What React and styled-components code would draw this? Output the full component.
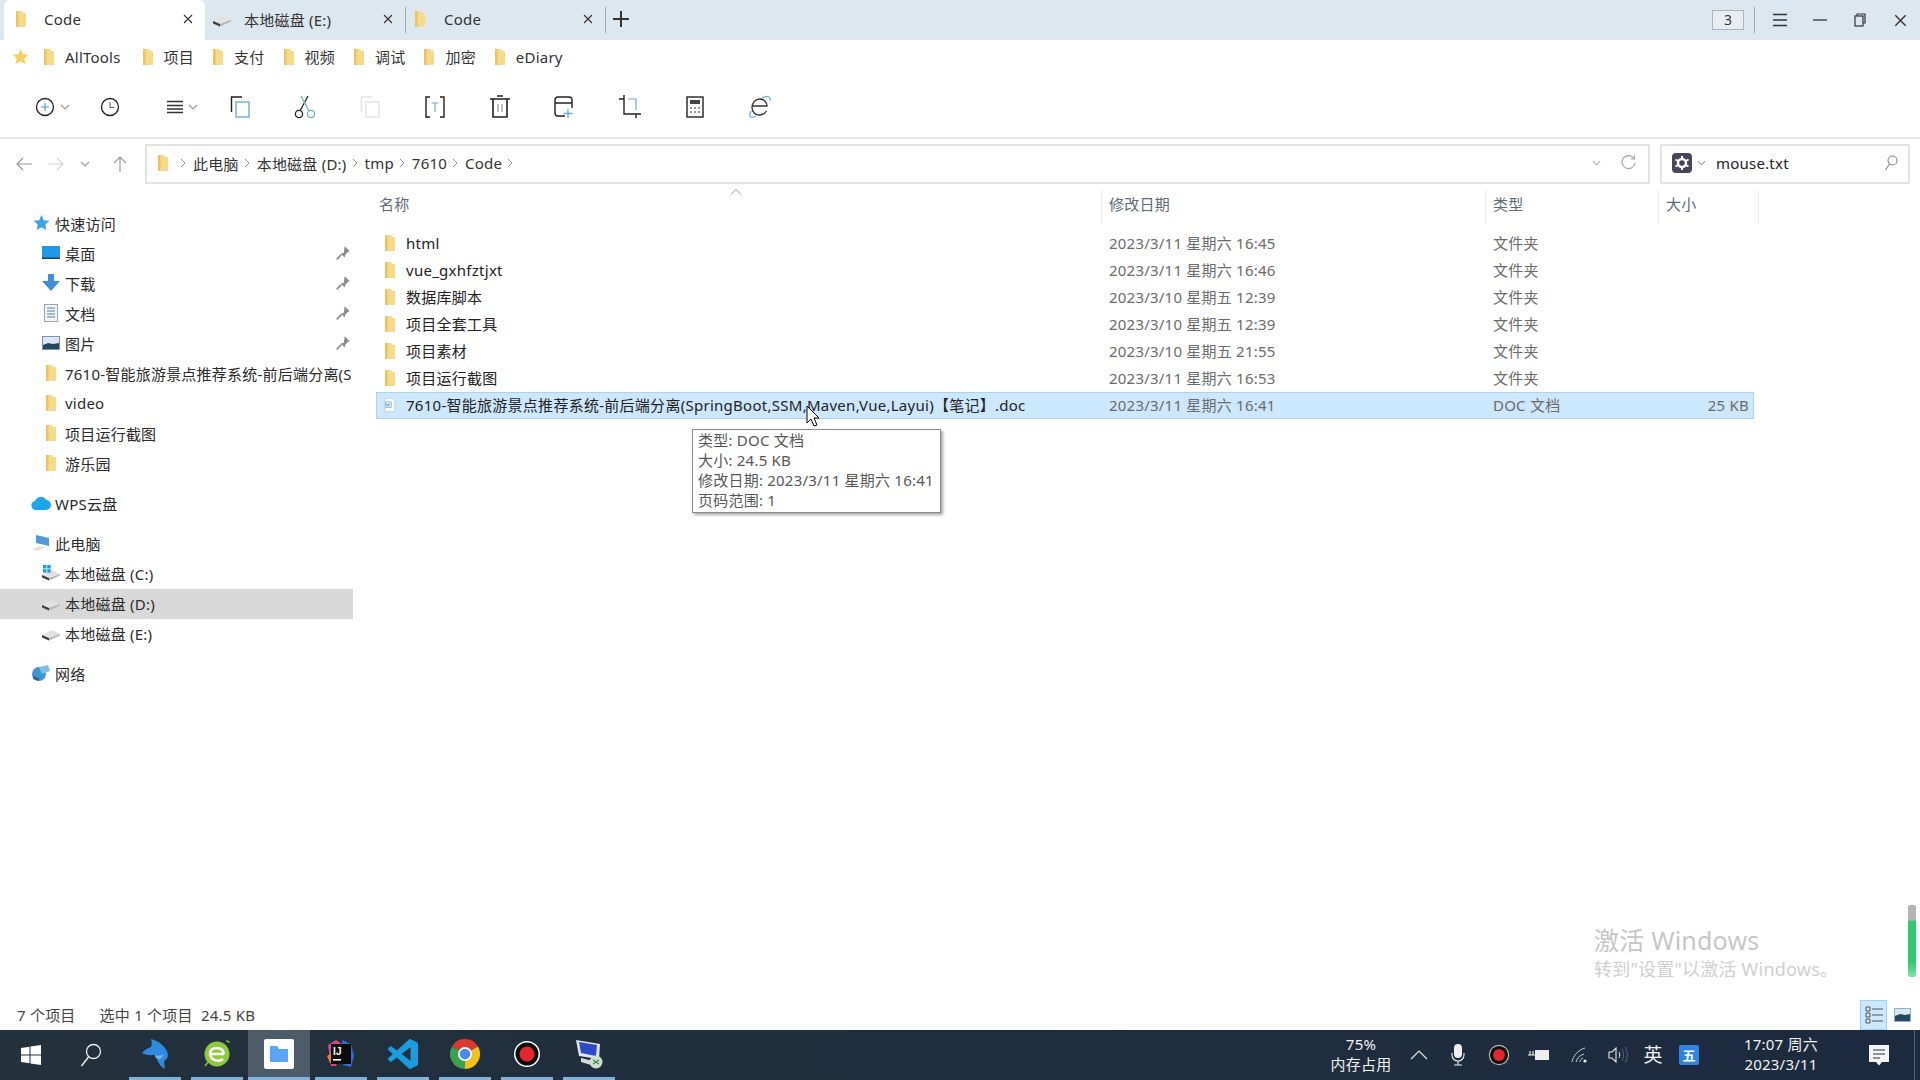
import React from 'react';
import styled, { createGlobalStyle } from 'styled-components';

const GlobalStyle = createGlobalStyle`
  html, body {
    margin: 0;
    padding: 0;
    background: #fff;
    font-family: "Noto Sans", "Noto Sans CJK SC", sans-serif;
    font-size: 15px;
    letter-spacing: 0.22px;
    color: #222;
  }
  * { box-sizing: border-box; }
`;

const Page = styled.div`
  position: relative;
  width: 1920px;
  height: 1080px;
  overflow: hidden;
  display: flex;
  flex-direction: column;
  background: #fff;
`;

/* tabs */
const TabBar = styled.div`
  height: 40px;
  flex: none;
  display: flex;
  align-items: stretch;
  padding-left: 4px;
  background: #dde7f0;
`;
const Tab = styled.div`
  width: ${(p) => p.$w}px;
  display: flex;
  align-items: center;
  padding: 0 12px 2px ${(p) => p.$pad}px;
  color: #333;
  background: ${(p) => (p.$active ? '#fff' : 'transparent')};
  border-radius: ${(p) => (p.$active ? '6px 6px 0 0' : '0')};
`;
const TabIcon = styled.span`
  width: ${(p) => p.$w || 12}px;
  margin-right: ${(p) => p.$gap}px;
  display: flex;
  justify-content: center;
`;
const TabClose = styled.span`
  margin-left: auto;
  display: flex;
`;
const TabDivider = styled.div`
  width: 1px;
  height: 26px;
  margin-right: ${(p) => p.$after || 0}px;
  align-self: center;
  background: #9aa5ad;
`;
const PlusBtn = styled.div`
  width: 30px;
  display: flex;
  align-items: center;
  justify-content: center;
  margin-top: -2px;
`;
const WinControls = styled.div`
  margin-left: auto;
  display: flex;
  align-items: center;
`;
const CountBox = styled.div`
  width: 32px;
  height: 20px;
  margin-right: 10px;
  border: 1px solid #a9b4bc;
  background: #e6edf3;
  font-size: 14px;
  line-height: 18px;
  text-align: center;
  color: #333;
`;
const WinBtn = styled.div`
  width: 40px;
  display: flex;
  justify-content: center;
`;

/* favourites */
const FavBar = styled.div`
  height: 36px;
  flex: none;
  display: flex;
  align-items: center;
  gap: 18px;
  padding: 0 0 2px 11px;
  color: #333;
`;
const FavStar = styled.span`
  width: 18px;
  display: flex;
  margin-right: -4px;
`;
const FavItem = styled.div`
  display: flex;
  align-items: center;
  gap: 10px;
  line-height: 20px;
  margin-right: ${(p) => p.$extra || 0}px;
`;

/* toolbar */
const Toolbar = styled.div`
  height: 63px;
  flex: none;
  display: flex;
  align-items: center;
  padding: 1px 0 0 12px;
  border-bottom: 2px solid #e6e6e6;
`;
const ToolBtn = styled.div`
  width: 65px;
  display: flex;
  justify-content: center;
  align-items: center;
`;
const ToolChevron = styled.span`
  width: 10px;
  margin-left: 5px;
  margin-right: -15px;
  display: flex;
`;

/* address row */
const AddressRow = styled.div`
  height: 51px;
  flex: none;
  display: flex;
  align-items: flex-start;
  padding: 5px 10px 0 0;
`;
const NavGroup = styled.div`
  width: 145px;
  height: 40px;
  flex: none;
  display: flex;
  align-items: center;
  padding-left: 8px;
`;
const NavBtn = styled.span`
  width: ${(p) => p.$w}px;
  flex: none;
  display: flex;
  justify-content: center;
`;
const AddressBox = styled.div`
  flex: 1;
  height: 40px;
  display: flex;
  align-items: center;
  padding: 0 12px 2px 10px;
  border: 2px solid #e4e4e4;
  color: #333;
`;
const Crumb = styled.span`
  white-space: nowrap;
`;
const CrumbSep = styled.span`
  width: 8px;
  margin: 0 6px 0 ${(p) => (p.$first ? 10 : 4)}px;
  display: flex;
  justify-content: center;
`;
const AddressTail = styled.div`
  margin-left: auto;
  display: flex;
  align-items: center;
  gap: 20px;
`;
const SearchBox = styled.div`
  width: 250px;
  height: 40px;
  flex: none;
  margin-left: 10px;
  display: flex;
  align-items: center;
  padding: 0 10px 2px;
  border: 2px solid #e4e4e4;
`;
const SearchChevron = styled.span`
  margin-left: 5px;
  display: flex;
`;
const SearchText = styled.span`
  margin-left: 10px;
  color: #222;
`;
const SearchGlass = styled.span`
  margin-left: auto;
  display: flex;
`;

/* main */
const Main = styled.div`
  flex: 1;
  min-height: 0;
  display: flex;
`;
const Sidebar = styled.div`
  width: 376px;
  flex: none;
  padding-top: 19px;
`;
const NavSection = styled.div`
  margin-bottom: 10px;
`;
const NavRow = styled.div`
  width: 353px;
  height: 30px;
  display: flex;
  align-items: center;
  gap: 4px;
  padding: 0 1px 2px ${(p) => p.$indent}px;
  color: #2b2b2b;
  background: ${(p) => (p.$selected ? '#d9d9d9' : 'transparent')};
`;
const NavIcon = styled.span`
  width: 20px;
  flex: none;
  display: flex;
  justify-content: center;
  align-items: center;
`;
const NavLabel = styled.span`
  flex: 1;
  min-width: 0;
  overflow: hidden;
  white-space: nowrap;
`;
const Pin = styled.span`
  flex: none;
  margin-right: 1px;
  display: flex;
`;

const FilePane = styled.div`
  flex: 1;
  min-width: 0;
`;
const HeaderRow = styled.div`
  height: 34px;
  margin-bottom: 6px;
  display: grid;
  grid-template-columns: 725px 384px 173px 100px;
  color: #5f6b78;
`;
const HeaderCell = styled.div`
  position: relative;
  display: flex;
  align-items: center;
  padding: 0 0 8px ${(p) => p.$pad ?? 8}px;
  border-right: 1px solid #ececec;
  margin-right: -1px;
`;
const SortCaret = styled.span`
  position: absolute;
  left: 354px;
  top: -1px;
  display: flex;
`;
const FileRow = styled.div`
  width: 1378px;
  height: 27px;
  display: grid;
  grid-template-columns: 725px 384px 173px 96px;
  align-items: center;
  background: ${(p) => (p.$selected ? '#cce8ff' : 'transparent')};
  box-shadow: ${(p) => (p.$selected ? 'inset 0 0 0 1px #a8d3f2' : 'none')};
`;
const NameCell = styled.div`
  display: flex;
  align-items: center;
  gap: 10px;
  padding: 0 0 2px 8px;
  color: #222;
  letter-spacing: 0.27px;
  white-space: nowrap;
`;
const FileIconBox = styled.span`
  width: 12px;
  flex: none;
  display: flex;
  justify-content: center;
`;
const MetaCell = styled.div`
  padding: 0 ${(p) => (p.$right ? '5px' : '8px')} 2px;
  color: #6b6b6b;
  text-align: ${(p) => (p.$right ? 'right' : 'left')};
  white-space: nowrap;
`;

/* status */
const StatusBar = styled.div`
  height: 30px;
  flex: none;
  display: flex;
  align-items: center;
  padding-left: 17px;
  color: #444;
`;
const StatusText = styled.span`
  margin-right: ${(p) => p.$gap || 0}px;
  padding-bottom: 2px;
  white-space: pre;
`;
const ViewBtns = styled.div`
  margin-left: auto;
  display: flex;
  align-items: stretch;
  height: 30px;
  padding-right: 9px;
`;
const ViewBtn = styled.div`
  width: ${(p) => p.$w}px;
  margin-right: ${(p) => p.$gap || 0}px;
  display: flex;
  align-items: center;
  justify-content: center;
  background: ${(p) => (p.$active ? '#cce8ff' : 'transparent')};
  border: ${(p) => (p.$active ? '1px solid #99d1ff' : 'none')};
`;

/* taskbar */
const Taskbar = styled.div`
  height: 50px;
  flex: none;
  display: flex;
  background: linear-gradient(90deg, #22313c 0%, #1f2e3e 50%, #1b2a40 100%);
  color: #f2f2f2;
`;
const StartBtn = styled.div`
  width: ${(p) => p.$w}px;
  flex: none;
  display: flex;
  align-items: center;
  justify-content: center;
`;
const AppSlot = styled.div`
  width: 62px;
  flex: none;
  position: relative;
  display: flex;
  align-items: center;
  justify-content: center;
  padding-bottom: 3px;
  background: ${(p) => (p.$active ? '#4b5b67' : 'transparent')};
  &::after {
    content: '';
    position: absolute;
    bottom: 0;
    height: 3px;
    left: ${(p) => (p.$active ? 0 : 5)}px;
    right: ${(p) => (p.$active ? 0 : 5)}px;
    background: #7fb3d8;
  }
`;
const Tray = styled.div`
  margin-left: auto;
  display: flex;
  align-items: stretch;
  padding-right: 17px;
  position: relative;
`;
const TraySlot = styled.div`
  width: ${(p) => p.$w}px;
  display: flex;
  flex-direction: column;
  align-items: center;
  justify-content: center;
  padding-bottom: ${(p) => (p.$text ? 2 : 0)}px;
  font-size: ${(p) => p.$fs || 15}px;
  line-height: 20px;
  white-space: nowrap;
`;
const ImeBadge = styled.div`
  width: 20px;
  height: 20px;
  border-radius: 2px;
  background: #2f86e0;
  color: #fff;
  font-size: 13px;
  font-weight: 700;
  line-height: 20px;
  text-align: center;
`;
const TrayEdge = styled.div`
  position: absolute;
  top: 0;
  bottom: 0;
  right: 5px;
  width: 1px;
  background: #56626e;
`;

/* overlays */
const Tooltip = styled.div`
  position: absolute;
  left: 692px;
  top: 429px;
  width: 249px;
  height: 84px;
  padding: 0 5px;
  background: #fff;
  border: 1px solid #8a8a8a;
  box-shadow: 2px 2px 3px rgba(0, 0, 0, 0.35);
  color: #575757;
  line-height: 20px;
  white-space: nowrap;
`;
const Cursor = styled.svg`
  position: absolute;
  left: 806px;
  top: 405px;
`;
const Watermark = styled.div`
  position: absolute;
  left: 1594px;
  top: 924px;
  color: #c6c6c6;
  white-space: nowrap;
`;
const WatermarkTitle = styled.div`
  font-size: 25px;
  line-height: 33px;
`;
const WatermarkSub = styled.div`
  font-size: 18px;
  line-height: 24px;
  color: #cfcfcf;
`;
const MemoryMeter = styled.div`
  position: absolute;
  left: 1908px;
  top: 905px;
  width: 8px;
  height: 72px;
  background: linear-gradient(180deg, #b5b5b5 0, #b5b5b5 21%, #2ecb70 23%, #2ecb70 80%, #8be3a6 100%);
  border-radius: 2px;
`;

/* drawings */
const FolderIcon = () => (
  <svg width="12" height="18" viewBox="0 0 12 18">
    <path d="M1 1h6l1.5 2H11v14H1z" fill="#f8db8a" />
    <path d="M1 1h2.500v16H1z" fill="#eec35e" />
  </svg>
);
const DriveIcon = ({ windows }) => (
  <svg width="20" height="16" viewBox="0 0 20 16">
    <polygon points="1,10 11,5 19,9 8,13" fill="#e2e2e2" />
    <path d="M1 10l7 3v2.500L1 12.500z" fill="#3d3d3d" />
    <path d="M8 13l11-4v1.500L8 15.500z" fill="#b5b5b5" />
    {windows && (
      <g fill="#1aa3dd">
        <rect x="2" y="0" width="3.500" height="3.500" />
        <rect x="6.200" y="0" width="3.500" height="3.500" />
        <rect x="2" y="4.200" width="3.500" height="3.500" />
        <rect x="6.200" y="4.200" width="3.500" height="3.500" />
      </g>
    )}
  </svg>
);
const Chevron = ({ c = '#9a9a9a', w = 10 }) => (
  <svg width={w} height="8" viewBox="0 0 10 8">
    <path d="M1 2l4 4 4-4" fill="none" stroke={c} strokeWidth="1.200" />
  </svg>
);
const CrumbChevron = () => (
  <svg width="6" height="10" viewBox="0 0 6 10">
    <path d="M1 1l4 4-4 4" fill="none" stroke="#8f8f8f" strokeWidth="1" />
  </svg>
);
const CloseX = ({ c = '#333', s = 10 }) => (
  <svg width={s} height={s} viewBox="0 0 10 10">
    <path d="M1 1l8 8M9 1l-8 8" stroke={c} strokeWidth="1.100" />
  </svg>
);
const PinIcon = () => (
  <svg width="16" height="16" viewBox="0 0 14 14">
    <path d="M8.500 1l4.500 4.500-1.500.5-2.500 2.500-.5 2.500L5 7.500l2.500-.5L8 4.500z" fill="#8c8c8c" />
    <path d="M5.500 8.500L1.500 12.500" stroke="#8c8c8c" strokeWidth="1.500" />
  </svg>
);
const DocIcon = () => (
  <svg width="16" height="20" viewBox="0 0 16 20">
    <path d="M1.500 1h9l4 4v14h-13z" fill="#f6fbff" stroke="#b9c7d6" />
    <rect x="2.500" y="6" width="7" height="7" fill="#fff" stroke="#4a86c8" strokeWidth=".8" />
    <path d="M3.500 7.500l1 4 1-3 1 3 1-4" fill="none" stroke="#4a86c8" strokeWidth=".8" />
  </svg>
);
const StarIcon = ({ color }) => (
  <svg width="18" height="18" viewBox="0 0 18 18">
    <path d="M9.500 1l2.300 5.300 5.700.5-4.300 3.700 1.300 5.600L9.500 13.200 4.500 16.100l1.300-5.600L1.500 6.800l5.700-.5z" fill={color} />
  </svg>
);

const toolIcons = {
  add: (
    <svg width="20" height="20" viewBox="0 0 20 20" fill="none">
      <circle cx="10" cy="10" r="8.500" stroke="#222" strokeWidth="1.300" />
      <path d="M10 6v8M6 10h8" stroke="#4ba3d4" strokeWidth="1.200" />
    </svg>
  ),
  clock: (
    <svg width="20" height="20" viewBox="0 0 20 20" fill="none">
      <circle cx="10" cy="10" r="8.500" stroke="#222" strokeWidth="1.300" />
      <path d="M10 5v5.500h4" stroke="#555" strokeWidth="1" />
    </svg>
  ),
  menu: (
    <svg width="16" height="14" viewBox="0 0 16 14">
      <path d="M0 1.500h16M0 5.500h16M0 9h16M0 12.500h16" stroke="#333" strokeWidth="1.300" />
    </svg>
  ),
  copy: (
    <svg width="20" height="22" viewBox="0 0 20 22" fill="none">
      <path d="M12 1H1.500v15" stroke="#222" strokeWidth="1.400" />
      <rect x="6" y="6" width="13" height="15" stroke="#6aaed6" strokeWidth="1.400" />
    </svg>
  ),
  cut: (
    <svg width="22" height="24" viewBox="0 0 22 24" fill="none">
      <path d="M14 1L6 16" stroke="#222" strokeWidth="1.300" />
      <path d="M7 1l8 15" stroke="#6aaed6" strokeWidth="1.300" />
      <circle cx="5" cy="19" r="3.600" stroke="#222" strokeWidth="1.300" />
      <circle cx="17" cy="19" r="3.600" stroke="#6aaed6" strokeWidth="1.300" />
    </svg>
  ),
  paste: (
    <svg width="20" height="22" viewBox="0 0 20 22" fill="none">
      <path d="M12 1H1.500v15" stroke="#e3e3e3" strokeWidth="1.400" />
      <rect x="6" y="6" width="13" height="15" stroke="#e3e3e3" strokeWidth="1.400" />
    </svg>
  ),
  rename: (
    <svg width="20" height="22" viewBox="0 0 20 22" fill="none">
      <path d="M5 1H1v20h4M15 1h4v20h-4" stroke="#222" strokeWidth="1.400" />
      <path d="M6.500 7h7M10 7v9" stroke="#6aaed6" strokeWidth="1.200" />
    </svg>
  ),
  trash: (
    <svg width="20" height="24" viewBox="0 0 20 24" fill="none">
      <path d="M0 4h20M7 1h6" stroke="#222" strokeWidth="1.500" />
      <path d="M3 4v18h14V4" stroke="#222" strokeWidth="1.600" />
      <path d="M8 9v8M12 9v8" stroke="#999" strokeWidth="1.300" />
    </svg>
  ),
  newFolder: (
    <svg width="21" height="24" viewBox="0 0 21 24" fill="none">
      <path d="M11 21H4a3 3 0 0 1-3-3V5a3 3 0 0 1 3-3h11a3 3 0 0 1 3 3v8M1 8h17" stroke="#222" strokeWidth="1.400" />
      <path d="M14 14v9M9.500 18.500h9" stroke="#6aaed6" strokeWidth="1.300" />
    </svg>
  ),
  crop: (
    <svg width="22" height="24" viewBox="0 0 22 24" fill="none">
      <path d="M0 4h5M5 0v19h17M17 23v-4" stroke="#222" strokeWidth="1.400" />
      <path d="M9 4h8v11" stroke="#6aaed6" strokeWidth="1.200" />
    </svg>
  ),
  calc: (
    <svg width="18" height="22" viewBox="0 0 18 22" fill="none">
      <rect x="1" y="1" width="16" height="20" stroke="#222" strokeWidth="1.400" />
      <rect x="4" y="4" width="10" height="4" fill="#444" />
      <path d="M4 12h2M8 12h2M12 12h2M4 16h2M8 16h2M12 16h2" stroke="#777" strokeWidth="1.300" />
    </svg>
  ),
  ie: (
    <svg width="24" height="24" viewBox="0 0 24 24" fill="none">
      <path d="M4 11h15c-.3-4-3.200-7-7.200-7C7.500 4 4 7.500 4 12.500c0 4.500 3.300 7.500 7.500 7.500 3 0 5.500-1.500 7-4" stroke="#333" strokeWidth="1.400" />
      <path d="M3 16C0 22 3 24 8 21M14 3c5-3 9-2 8 3" stroke="#6aaed6" strokeWidth="1.300" />
    </svg>
  ),
};

const navIcons = {
  desktop: (
    <svg width="18" height="14" viewBox="0 0 18 14">
      <rect width="18" height="13" fill="#1f97e8" />
      <rect y="11.500" width="18" height="1.500" fill="#14456b" />
    </svg>
  ),
  down: (
    <svg width="18" height="18" viewBox="0 0 18 18">
      <path d="M6 0h6v7h6l-9 10L0 7h6z" fill="#3f8fdc" />
    </svg>
  ),
  docs: (
    <svg width="14" height="18" viewBox="0 0 14 18">
      <rect x=".5" y=".5" width="13" height="17" fill="#f4f6f8" stroke="#9aa4b0" />
      <path d="M3 4h8M3 7h8M3 10h8M3 13h8" stroke="#4f7ea8" />
    </svg>
  ),
  pics: (
    <svg width="18" height="14" viewBox="0 0 18 14">
      <rect x=".5" y=".5" width="17" height="13" fill="#dbe8f3" stroke="#7f93a8" />
      <path d="M1 9l5-2 5 1 6-1v6H1z" fill="#24485f" />
    </svg>
  ),
  cloud: (
    <svg width="20" height="14" viewBox="0 0 20 14">
      <path d="M5 14a4.500 4.500 0 0 1-1-8.900A6 6 0 0 1 15 4a5 5 0 0 1 0 10z" fill="#1da7e8" />
    </svg>
  ),
  pc: (
    <svg width="20" height="18" viewBox="0 0 20 18">
      <path d="M5 1l13 3v8L5 9z" fill="#4f9cd4" />
      <path d="M1 15l8-3 6 1-8 4z" fill="#e3e3e3" />
    </svg>
  ),
  net: (
    <svg width="20" height="18" viewBox="0 0 20 18">
      <circle cx="8" cy="10" r="7" fill="#3d97d6" />
      <path d="M8 3l9-2 2 6-8 3z" fill="#7cc0e8" />
      <path d="M2 12l6 2v3l-6-2z" fill="#3f5f7a" />
    </svg>
  ),
};

const DolphinIcon = () => (
  <svg width="28" height="32" viewBox="0 0 28 32">
    <path d="M10 1c8 2 16 8 17 16 0 3-2 5-4 6l1 8c-4-2-7-6-8-10-1-1-2-3-2-4-3 0-8 1-13-2 2-3 6-5 9-6 1-2 1-5 0-8z" fill="#2f8be0" />
    <path d="M14 17c3 1 6 1 9-1-1 3-3 5-6 5-2-1-3-2-3-4z" fill="#6db5ee" />
  </svg>
);
const GreenIeIcon = () => (
  <svg width="30" height="32" viewBox="0 0 30 32">
    <circle cx="15" cy="16" r="12.500" fill="#8ccc3a" />
    <path d="M8 16h14M21 21c-4 3-12 2-13-5 0-4 3-6 7-6 4 0 7 3 7 6" fill="none" stroke="#fff" strokeWidth="2.500" />
    <path d="M3 28l3-4M24 3c2 0 3 0 3 2" stroke="#7ec33a" strokeWidth="1.500" fill="none" />
  </svg>
);
const FileMgrIcon = () => (
  <svg width="30" height="30" viewBox="0 0 30 30">
    <rect width="30" height="30" rx="2" fill="#fff" />
    <path d="M6 8a1 1 0 0 1 1-1h6l2 3h9v12a1 1 0 0 1-1 1H7a1 1 0 0 1-1-1z" fill="#5aa4f5" />
  </svg>
);
const IdeaIcon = () => (
  <svg width="32" height="32" viewBox="0 0 32 32">
    <path d="M3 7l8-5 6 4-6 22H6z" fill="#d8467e" />
    <path d="M17 2l9 4 3 12-3 11-8-2z" fill="#2f6fd8" />
    <path d="M2 18l6-4 3 10-6 1z" fill="#ee7b2e" />
    <rect x="6" y="6" width="20" height="20" fill="#0b0b0b" />
    <text x="8" y="17" fontSize="10" fontWeight="700" fontFamily="Liberation Sans, sans-serif" fill="#fff">IJ</text>
    <rect x="8" y="21" width="8" height="1.600" fill="#fff" />
  </svg>
);
const VsCodeIcon = () => (
  <svg width="30" height="30" viewBox="0 0 24 24">
    <path fill="#1a9ce0" d="M23.150 2.587L18.210.21a1.494 1.494 0 0 0-1.705.29l-9.460 8.630-4.120-3.128a.999.999 0 0 0-1.276.057L.327 7.261A1 1 0 0 0 .326 8.740L3.899 12 .326 15.260a1 1 0 0 0 .001 1.479L1.650 17.940a.999.999 0 0 0 1.276.057l4.120-3.128 9.460 8.630a1.492 1.492 0 0 0 1.704.290l4.942-2.377A1.500 1.500 0 0 0 24 20.060V3.939a1.500 1.500 0 0 0-.850-1.352zm-5.146 14.861L10.826 12l7.178-5.448v10.896z" />
  </svg>
);
const ChromeIcon = () => (
  <svg width="30" height="30" viewBox="0 0 24 24">
    <path d="M12 12L1.600 6A12 12 0 0 1 22.400 6z" fill="#d9392f" />
    <path d="M12 12L22.400 6A12 12 0 0 1 12 24z" fill="#f3c11b" />
    <path d="M12 12L12 24A12 12 0 0 1 1.600 6z" fill="#3aa14d" />
    <circle cx="12" cy="12" r="5.600" fill="#fff" />
    <circle cx="12" cy="12" r="4.300" fill="#4a8bef" />
  </svg>
);
const RecIcon = ({ ring = '#fff', s = 28 }) => (
  <svg width={s} height={s} viewBox="0 0 28 28">
    <circle cx="14" cy="14" r="13" fill={ring} />
    <circle cx="14" cy="14" r="11.500" fill="#0c0c0c" />
    <circle cx="14" cy="14" r="7.500" fill="#e5272b" />
  </svg>
);
const RemoteIcon = () => (
  <svg width="32" height="32" viewBox="0 0 32 32">
    <path d="M3 2l24 4-1 15-20-3z" fill="#dfe5ee" />
    <path d="M6 4l18 3-1 11-15-3z" fill="#2a4cc8" />
    <path d="M8 20l12 3-2 4-10-3z" fill="#d6dadd" />
    <circle cx="23" cy="24" r="6.500" fill="#d3ddd0" />
    <path d="M20 22l3 2-3 2M26 22l-3 2 3 2" stroke="#2e9b47" strokeWidth="1.300" fill="none" />
  </svg>
);

const tabs = [
  { name: 'Code', w: 201, pad: 11, gap: 17, active: true },
  { name: '本地磁盘 (E:)', w: 200, pad: 7, gap: 12, drive: true },
  { name: 'Code', w: 199, pad: 8, gap: 18 },
];
const favs = ['AllTools', '项目', '支付', '视频', '调试', '加密', 'eDiary'];
const tools = [
  { key: 'add', chevron: true },
  { key: 'clock' },
  { key: 'menu', chevron: true },
  { key: 'copy' },
  { key: 'cut' },
  { key: 'paste' },
  { key: 'rename' },
  { key: 'trash' },
  { key: 'newFolder' },
  { key: 'crop' },
  { key: 'calc' },
  { key: 'ie' },
];
const crumbs = ['此电脑', '本地磁盘 (D:)', 'tmp', '7610', 'Code'];
const files = [
  { name: 'html', date: '2023/3/11 星期六 16:45' },
  { name: 'vue_gxhfztjxt', date: '2023/3/11 星期六 16:46' },
  { name: '数据库脚本', date: '2023/3/10 星期五 12:39' },
  { name: '项目全套工具', date: '2023/3/10 星期五 12:39' },
  { name: '项目素材', date: '2023/3/10 星期五 21:55' },
  { name: '项目运行截图', date: '2023/3/11 星期六 16:53' },
];
const quickAccess = [
  { label: '桌面', icon: navIcons.desktop, pin: true },
  { label: '下载', icon: navIcons.down, pin: true },
  { label: '文档', icon: navIcons.docs, pin: true },
  { label: '图片', icon: navIcons.pics, pin: true },
  { label: '7610-智能旅游景点推荐系统-前后端分离(S', icon: <FolderIcon /> },
  { label: 'video', icon: <FolderIcon /> },
  { label: '项目运行截图', icon: <FolderIcon /> },
  { label: '游乐园', icon: <FolderIcon /> },
];
const apps = [
  { key: 'dolphin', icon: <DolphinIcon /> },
  { key: 'ie', icon: <GreenIeIcon /> },
  { key: 'files', icon: <FileMgrIcon />, active: true },
  { key: 'idea', icon: <IdeaIcon /> },
  { key: 'vscode', icon: <VsCodeIcon /> },
  { key: 'chrome', icon: <ChromeIcon /> },
  { key: 'rec', icon: <RecIcon /> },
  { key: 'remote', icon: <RemoteIcon /> },
];

export default function App() {
  return (
    <Page>
      <GlobalStyle />
      <TabBar>
        {tabs.map((t, i) => (
          <React.Fragment key={i}>
            <Tab $w={t.w} $pad={t.pad} $active={t.active}>
              <TabIcon $w={t.drive ? 20 : 12} $gap={t.gap}>
                {t.drive ? <DriveIcon /> : <FolderIcon />}
              </TabIcon>
              {t.name}
              <TabClose>
                <CloseX />
              </TabClose>
            </Tab>
            {i > 0 && <TabDivider />}
          </React.Fragment>
        ))}
        <PlusBtn>
          <svg width="16" height="16" viewBox="0 0 16 16">
            <path d="M8 0v16M0 8h16" stroke="#333" strokeWidth="2" />
          </svg>
        </PlusBtn>
        <WinControls>
          <CountBox>3</CountBox>
          <TabDivider $after={5} />
          <WinBtn>
            <svg width="14" height="14" viewBox="0 0 14 14">
              <path d="M0 1.500h14M0 7h14M0 12.500h14" stroke="#333" strokeWidth="1.300" />
            </svg>
          </WinBtn>
          <WinBtn>
            <svg width="14" height="2" viewBox="0 0 14 2">
              <path d="M0 1h14" stroke="#333" strokeWidth="1.300" />
            </svg>
          </WinBtn>
          <WinBtn>
            <svg width="14" height="14" viewBox="0 0 14 14" fill="none">
              <path d="M4 3V1h8v9h-2" stroke="#333" strokeWidth="1.200" />
              <rect x="2" y="3" width="8" height="10" stroke="#333" strokeWidth="1.200" />
            </svg>
          </WinBtn>
          <WinBtn>
            <CloseX s={13} />
          </WinBtn>
        </WinControls>
      </TabBar>

      <FavBar>
        <FavStar>
          <StarIcon color="#f7cf5e" />
        </FavStar>
        {favs.map((f) => (
          <FavItem key={f} $extra={f === 'AllTools' ? 3 : 0}>
            <FolderIcon />
            {f}
          </FavItem>
        ))}
      </FavBar>

      <Toolbar>
        {tools.map((t) => (
          <ToolBtn key={t.key}>
            {toolIcons[t.key]}
            {t.chevron && (
              <ToolChevron>
                <Chevron />
              </ToolChevron>
            )}
          </ToolBtn>
        ))}
      </Toolbar>

      <AddressRow>
        <NavGroup>
          <NavBtn $w={32}>
            <svg width="16" height="14" viewBox="0 0 16 14" fill="none">
              <path d="M7 1L1 7l6 6M1 7h15" stroke="#9a9a9a" strokeWidth="1.200" />
            </svg>
          </NavBtn>
          <NavBtn $w={32}>
            <svg width="16" height="14" viewBox="0 0 16 14" fill="none">
              <path d="M9 1l6 6-6 6M15 7H0" stroke="#d6d6d6" strokeWidth="1.200" />
            </svg>
          </NavBtn>
          <NavBtn $w={26}>
            <Chevron w={12} />
          </NavBtn>
          <NavBtn $w={44}>
            <svg width="14" height="16" viewBox="0 0 14 16" fill="none">
              <path d="M1 7l6-6 6 6M7 1v15" stroke="#9a9a9a" strokeWidth="1.200" />
            </svg>
          </NavBtn>
        </NavGroup>
        <AddressBox>
          <FolderIcon />
          <CrumbSep $first>
            <CrumbChevron />
          </CrumbSep>
          {crumbs.map((c) => (
            <React.Fragment key={c}>
              <Crumb>{c}</Crumb>
              <CrumbSep>
                <CrumbChevron />
              </CrumbSep>
            </React.Fragment>
          ))}
          <AddressTail>
            <Chevron c="#aaa" w={9} />
            <svg width="15" height="16" viewBox="0 0 15 16" fill="none">
              <path d="M13 3.500A6.500 6.500 0 1 0 14 8M13.500 0v4h-4" stroke="#a8a8a8" strokeWidth="1.200" />
            </svg>
          </AddressTail>
        </AddressBox>
        <SearchBox>
          <svg width="20" height="20" viewBox="0 0 20 20">
            <rect width="20" height="20" rx="4" fill="#45475a" />
            <circle cx="10" cy="10" r="4" fill="none" stroke="#fff" strokeWidth="2.500" />
            <path d="M10 3v3M10 14v3M3.500 6.500l2.600 1.500M13.900 12l2.600 1.500M3.500 13.500L6.100 12M13.900 8l2.600-1.500" stroke="#fff" strokeWidth="2" />
          </svg>
          <SearchChevron>
            <Chevron w={9} />
          </SearchChevron>
          <SearchText>mouse.txt</SearchText>
          <SearchGlass>
            <svg width="14" height="16" viewBox="0 0 14 16" fill="none">
              <circle cx="8.500" cy="5.500" r="4.500" stroke="#888" strokeWidth="1.100" />
              <path d="M5.500 9L1.500 15" stroke="#888" strokeWidth="1.100" />
            </svg>
          </SearchGlass>
        </SearchBox>
      </AddressRow>

      <Main>
        <Sidebar>
          <NavSection>
            <NavRow $indent={31}>
              <NavIcon>
                <StarIcon color="#3aa6e8" />
              </NavIcon>
              <NavLabel>快速访问</NavLabel>
            </NavRow>
            {quickAccess.map((q) => (
              <NavRow $indent={41} key={q.label}>
                <NavIcon>{q.icon}</NavIcon>
                <NavLabel>{q.label}</NavLabel>
                {q.pin && (
                  <Pin>
                    <PinIcon />
                  </Pin>
                )}
              </NavRow>
            ))}
          </NavSection>
          <NavSection>
            <NavRow $indent={31}>
              <NavIcon>{navIcons.cloud}</NavIcon>
              <NavLabel>WPS云盘</NavLabel>
            </NavRow>
          </NavSection>
          <NavSection>
            <NavRow $indent={31}>
              <NavIcon>{navIcons.pc}</NavIcon>
              <NavLabel>此电脑</NavLabel>
            </NavRow>
            <NavRow $indent={41}>
              <NavIcon>
                <DriveIcon windows />
              </NavIcon>
              <NavLabel>本地磁盘 (C:)</NavLabel>
            </NavRow>
            <NavRow $indent={41} $selected>
              <NavIcon>
                <DriveIcon />
              </NavIcon>
              <NavLabel>本地磁盘 (D:)</NavLabel>
            </NavRow>
            <NavRow $indent={41}>
              <NavIcon>
                <DriveIcon />
              </NavIcon>
              <NavLabel>本地磁盘 (E:)</NavLabel>
            </NavRow>
          </NavSection>
          <NavSection>
            <NavRow $indent={31}>
              <NavIcon>{navIcons.net}</NavIcon>
              <NavLabel>网络</NavLabel>
            </NavRow>
          </NavSection>
        </Sidebar>

        <FilePane>
          <HeaderRow>
            <HeaderCell $pad={3}>
              名称
              <SortCaret>
                <svg width="12" height="6" viewBox="0 0 12 6" fill="none">
                  <path d="M1 5.500l5-5 5 5" stroke="#999" />
                </svg>
              </SortCaret>
            </HeaderCell>
            <HeaderCell>修改日期</HeaderCell>
            <HeaderCell>类型</HeaderCell>
            <HeaderCell>大小</HeaderCell>
          </HeaderRow>
          {files.map((f) => (
            <FileRow key={f.name}>
              <NameCell>
                <FileIconBox>
                  <FolderIcon />
                </FileIconBox>
                {f.name}
              </NameCell>
              <MetaCell>{f.date}</MetaCell>
              <MetaCell>文件夹</MetaCell>
              <MetaCell $right />
            </FileRow>
          ))}
          <FileRow $selected>
            <NameCell>
              <FileIconBox>
                <DocIcon />
              </FileIconBox>
              7610-智能旅游景点推荐系统-前后端分离(SpringBoot,SSM,Maven,Vue,Layui)【笔记】.doc
            </NameCell>
            <MetaCell>2023/3/11 星期六 16:41</MetaCell>
            <MetaCell>DOC 文档</MetaCell>
            <MetaCell $right>25 KB</MetaCell>
          </FileRow>
        </FilePane>
      </Main>

      <StatusBar>
        <StatusText $gap={24}>7 个项目</StatusText>
        <StatusText>选中 1 个项目  24.5 KB</StatusText>
        <ViewBtns>
          <ViewBtn $w={27} $gap={7} $active>
            <svg width="18" height="18" viewBox="0 0 18 18" fill="none">
              <path d="M1 1h4v4H1zM1 7h4v4H1zM1 13h4v4H1z" stroke="#555" />
              <path d="M7 3h11M7 9h11M7 15h11" stroke="#555" />
            </svg>
          </ViewBtn>
          <ViewBtn $w={17}>
            <svg width="17" height="14" viewBox="0 0 17 14">
              <rect x=".5" y=".5" width="16" height="13" fill="#dbe8f3" stroke="#8fb2cc" />
              <path d="M1 8l5-2 5 1 5-1v7H1z" fill="#24485f" />
            </svg>
          </ViewBtn>
        </ViewBtns>
      </StatusBar>

      <Taskbar>
        <StartBtn $w={62}>
          <svg width="20" height="20" viewBox="0 0 20 20" fill="#fff">
            <path d="M0 3l8.500-1.200V9.500H0zM9.500 1.600L20 0v9.500H9.500zM0 10.500h8.500v7.700L0 17zM9.500 10.500H20V20L9.500 18.400z" />
          </svg>
        </StartBtn>
        <StartBtn $w={58}>
          <svg width="22" height="24" viewBox="0 0 22 24" fill="none">
            <circle cx="13.500" cy="8.500" r="7" stroke="#f0f0f0" strokeWidth="1.300" />
            <path d="M8.500 14L1.500 23" stroke="#f0f0f0" strokeWidth="1.400" />
          </svg>
        </StartBtn>
        <StartBtn $w={4} />
        {apps.map((a) => (
          <AppSlot key={a.key} $active={a.active}>
            {a.icon}
          </AppSlot>
        ))}
        <Tray>
          <TraySlot $w={80} $text>
            <span>75%</span>
            <span>内存占用</span>
          </TraySlot>
          <TraySlot $w={36}>
            <svg width="18" height="10" viewBox="0 0 18 10" fill="none">
              <path d="M1 9l8-8 8 8" stroke="#e6e6e6" strokeWidth="1.200" />
            </svg>
          </TraySlot>
          <TraySlot $w={42}>
            <svg width="14" height="22" viewBox="0 0 14 22" fill="none">
              <rect x="3" y="0" width="8" height="14" rx="4" fill="#eee" />
              <path d="M1 9v2a6 6 0 0 0 12 0V9M7 17v4M3 21h8" stroke="#eee" strokeWidth="1.100" />
            </svg>
          </TraySlot>
          <TraySlot $w={40}>
            <RecIcon ring="#b8b8b8" s={22} />
          </TraySlot>
          <TraySlot $w={40}>
            <svg width="22" height="14" viewBox="0 0 22 14" fill="none">
              <rect x="7" y="2" width="14" height="10" fill="#eee" />
              <path d="M0 7h7M2 3v4M5 3v4" stroke="#eee" strokeWidth="1.200" />
            </svg>
          </TraySlot>
          <TraySlot $w={42}>
            <svg width="18" height="16" viewBox="0 0 18 16" fill="none">
              <path d="M1 15C2 9 7 3 14 1M5 15c1-4 4-7 8-8M9 15c0-2 1-3 3-4" stroke="#c9ced4" strokeWidth="1" />
              <circle cx="14" cy="14" r="1.600" fill="#eee" />
            </svg>
          </TraySlot>
          <TraySlot $w={34}>
            <svg width="20" height="18" viewBox="0 0 20 18" fill="none">
              <path d="M1 6h3l4-4v14l-4-4H1z" stroke="#e8e8e8" strokeWidth="1.100" />
              <path d="M11 6c1 2 1 4 0 6" stroke="#e8e8e8" />
              <path d="M14 3c2 4 2 8 0 12M17 1c3 5 3 11 0 16" stroke="#55606d" />
            </svg>
          </TraySlot>
          <TraySlot $w={36} $fs={19}>英</TraySlot>
          <TraySlot $w={36}>
            <ImeBadge>五</ImeBadge>
          </TraySlot>
          <TraySlot $w={148} $text>
            <span>17:07 周六</span>
            <span>2023/3/11</span>
          </TraySlot>
          <TraySlot $w={48}>
            <svg width="20" height="21" viewBox="0 0 20 21">
              <path d="M0 0h20v17h-7l-3 3.500L7 17H0z" fill="#f4f4f4" />
              <path d="M4 5h12M4 9h12M4 13h7" stroke="#23303f" strokeWidth="1.200" />
            </svg>
          </TraySlot>
          <TrayEdge />
        </Tray>
      </Taskbar>

      <Tooltip>
        <div>类型: DOC 文档</div>
        <div>大小: 24.5 KB</div>
        <div>修改日期: 2023/3/11 星期六 16:41</div>
        <div>页码范围: 1</div>
      </Tooltip>
      <Cursor width="14" height="22" viewBox="0 0 14 22">
        <path d="M1 1v17l4-4 3 7 3-1-3-7h5z" fill="#fff" stroke="#000" strokeWidth="1" />
      </Cursor>
      <Watermark>
        <WatermarkTitle>激活 Windows</WatermarkTitle>
        <WatermarkSub>转到"设置"以激活 Windows。</WatermarkSub>
      </Watermark>
      <MemoryMeter />
    </Page>
  );
}
